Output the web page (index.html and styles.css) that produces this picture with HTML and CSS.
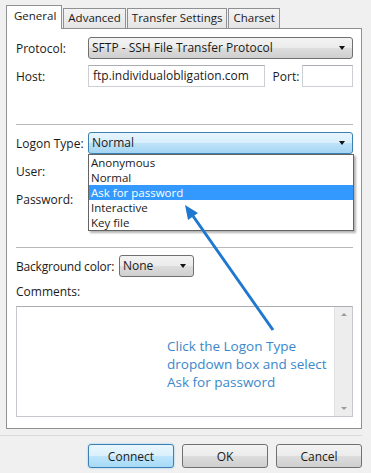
FILE: index.html
```html
<!DOCTYPE html>
<html lang="en">
<head>
    <meta charset="UTF-8">
    <title>Site Manager - General</title>
    <link rel="stylesheet" href="styles.css">
</head>
<body>
    <div class="dialog">
        <div class="tabs">
            <div class="tab active">General</div>
            <div class="tab">Advanced</div>
            <div class="tab">Transfer Settings</div>
            <div class="tab">Charset</div>
        </div>
        <div class="panel">
            <div class="row">
                <span class="label">Protocol:</span>
                <div class="combo wide">SFTP - SSH File Transfer Protocol<span class="caret"></span></div>
            </div>
            <div class="row spaced">
                <span class="label">Host:</span>
                <div class="field host">ftp.individualobligation.com</div>
                <span class="port-label">Port:</span>
                <div class="field port"></div>
            </div>
            <div class="sep"></div>
            <div class="row">
                <span class="label">Logon Type:</span>
                <div class="combo wide focused">Normal<span class="caret"></span>
                    <ul class="dropdown">
                        <li>Anonymous</li>
                        <li>Normal</li>
                        <li class="selected">Ask for password</li>
                        <li>Interactive</li>
                        <li>Key file</li>
                    </ul>
                </div>
            </div>
            <div class="row spaced">
                <span class="label">User:</span>
                <div class="field wide"></div>
            </div>
            <div class="row spaced">
                <span class="label">Password:</span>
                <div class="field wide"></div>
            </div>
            <div class="sep"></div>
            <div class="row">
                <span class="label bg-label">Background color:</span>
                <div class="combo small">None<span class="caret"></span></div>
            </div>
            <div class="comments-label">Comments:</div>
            <div class="comments">
                <div class="note">Click the Logon Type<br>dropdown box and select<br>Ask for password</div>
                <div class="scrollbar">
                    <span class="sb-up"></span>
                    <span class="sb-down"></span>
                </div>
            </div>
        </div>
        <div class="footer">
            <button class="btn default">Connect</button>
            <button class="btn">OK</button>
            <button class="btn">Cancel</button>
        </div>
    </div>
    <!-- callout arrow drawn over the dialog -->
    <svg class="callout" width="371" height="473" viewBox="0 0 371 473">
        <line x1="273" y1="330" x2="193" y2="216" stroke="#1f78d0" stroke-width="3"/>
        <polygon points="185,205 198,213 188,220" fill="#1f78d0"/>
    </svg>
</body>
</html>
```

FILE: styles.css
```css
body {
    margin: 0;
    width: 371px;
    height: 473px;
    overflow: hidden;
    position: relative;
    background-color: #f0f0f0;
    font-family: 'Open Sans', sans-serif;
    font-size: 12px;
    color: #1a1a1a;
}
.dialog {
    padding: 5px 9px 0 6px;
}
.tabs {
    display: flex;
    align-items: flex-end;
    gap: 1px;
    height: 23px;
    position: relative;
    z-index: 1;
    font-size: 11.5px;
}
.tab {
    box-sizing: border-box;
    height: 20px;
    line-height: 18px;
    padding: 0 4px;
    border: 1px solid #8e9094;
    border-bottom: none;
    background: linear-gradient(#f4f4f4, #e4e4e4);
}
.tab.active {
    height: 24px;
    line-height: 20px;
    margin-bottom: -1px;
    padding: 0 5px 0 7px;
    background: #fff;
}
.panel {
    background-color: #fff;
    border: 1px solid #8e9094;
    padding: 8px 8px 11px 9px;
}
.row {
    display: flex;
    align-items: center;
    height: 22px;
}
.row.spaced {
    margin-top: 6px;
}
.label {
    width: 72px;
    flex-shrink: 0;
}
.bg-label {
    width: 103px;
    letter-spacing: -0.2px;
}
.sep {
    height: 1px;
    background-color: #b8b8b8;
    margin: 37px 0 7px;
}
.combo {
    position: relative;
    box-sizing: border-box;
    height: 22px;
    line-height: 20px;
    padding-left: 3px;
    border: 1px solid #707070;
    border-radius: 3px;
    background: linear-gradient(#f3f3f3, #ebebeb 50%, #dddddd 50%, #cfcfcf);
}
.combo.wide {
    flex: 1;
}
.combo.small {
    width: 75px;
}
.combo.focused {
    border-color: #3c7fb1;
    background: linear-gradient(#e8f5fd, #d6eefb 50%, #bfe3f8 50%, #a3d5f3);
}
.caret {
    position: absolute;
    right: 7px;
    top: 8px;
    border-top: 4px solid #111;
    border-left: 3.5px solid transparent;
    border-right: 3.5px solid transparent;
}
.dropdown {
    position: absolute;
    top: 21px;
    left: -1px;
    right: -2px;
    z-index: 3;
    margin: 0;
    padding: 0;
    list-style: none;
    background-color: #fff;
    border: 1px solid #646464;
    box-shadow: 2px 2px 2px rgba(0, 0, 0, 0.3);
}
.dropdown li {
    height: 15px;
    line-height: 15px;
    padding-left: 2px;
    font-size: 11.5px;
    color: #1a1a1a;
}
.dropdown li.selected {
    background-color: #3399ff;
    color: #fff;
}
.field {
    box-sizing: border-box;
    height: 22px;
    line-height: 20px;
    padding-left: 4px;
    border: 1px solid #ccd0d5;
    border-top-color: #abadb3;
    background-color: #fff;
}
.field.wide {
    flex: 1;
}
.field.host {
    width: 178px;
}
.port-label {
    margin-left: 8px;
    width: 30px;
}
.field.port {
    width: 51px;
}
.comments-label {
    margin-top: 7px;
    height: 16px;
    line-height: 16px;
}
.comments {
    display: flex;
    margin-top: 6px;
    height: 111px;
    box-sizing: border-box;
    border: 1px solid #c5c8cd;
    border-top-color: #abadb3;
}
.note {
    flex: 1;
    padding: 30px 0 0 150px;
    font-size: 13.5px;
    line-height: 18px;
    color: #3a88ca;
}
.scrollbar {
    width: 17px;
    display: flex;
    flex-direction: column;
    justify-content: space-between;
    align-items: center;
    padding: 6px 0;
    background-color: #ededed;
    border-left: 1px solid #e2e2e2;
}
.sb-up, .sb-down {
    border-left: 3px solid transparent;
    border-right: 3px solid transparent;
}
.sb-up {
    border-bottom: 3px solid #9a9a9a;
}
.sb-down {
    border-top: 3px solid #9a9a9a;
}
.footer {
    display: flex;
    justify-content: flex-end;
    gap: 8px;
    margin: 6px 0 0 -6px;
    padding-top: 8px;
    border-top: 1px solid #dadada;
}
.btn {
    width: 86px;
    height: 24px;
    padding: 0;
    font-family: 'Open Sans', sans-serif;
    font-size: 12px;
    color: #1a1a1a;
    border: 1px solid #707070;
    border-radius: 3px;
    background: linear-gradient(#f3f3f3, #ebebeb 50%, #dddddd 50%, #cfcfcf);
}
.btn.default {
    border-color: #3c7fb1;
    background: linear-gradient(#eaf6fd, #d9f0fc 50%, #bee6fd 50%, #a7d9f5);
    box-shadow: 0 0 2px #7cc3f0;
}
.callout {
    position: absolute;
    top: 0;
    left: 0;
    z-index: 5;
    pointer-events: none;
}
```
